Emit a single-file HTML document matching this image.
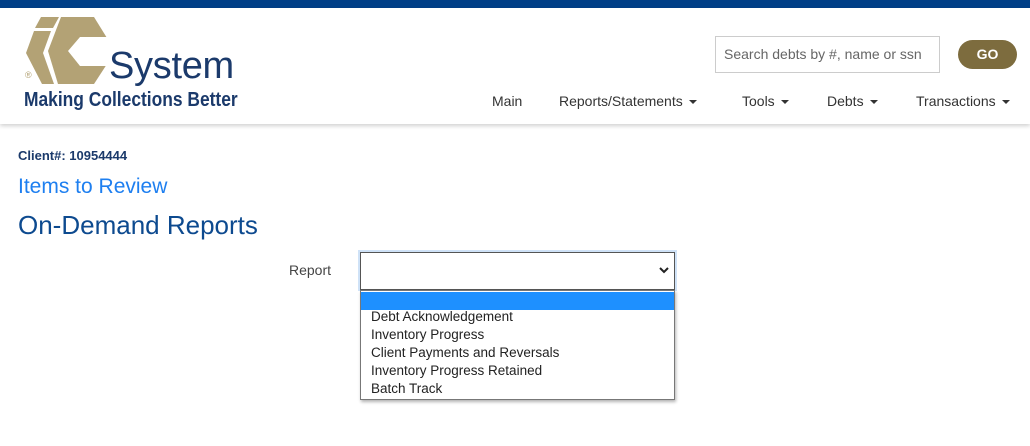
<!DOCTYPE html>
<html><head><style>
body{margin:0;width:1030px;height:446px;background:#fff;font-family:"Liberation Sans",sans-serif;position:relative;overflow:hidden}
.top{position:absolute;left:0;top:0;width:1030px;height:8px;background:#003f87}
.hdr{position:absolute;left:0;top:8px;width:1030px;height:116px;background:#fff;box-shadow:0 2px 4px rgba(0,0,0,.18)}
.a{position:absolute;white-space:nowrap}
.nav{top:93px;font-size:14px;color:#333}
.car{display:inline-block;width:0;height:0;border-left:4px solid transparent;border-right:4px solid transparent;border-top:4px solid #333;vertical-align:middle;margin-left:6px}
.opt{position:absolute;left:10px;font-size:13.5px;color:#222}
</style></head><body>
<div class="top"></div>
<div class="hdr"></div>
<svg class="a" style="left:0;top:0" width="120" height="95" viewBox="0 0 120 95">
<polygon points="61,17 94,17 107,38 107,64 94,84 58,84 48,51" fill="#b3a275"/>
<polygon points="80,37 110,37 110,66 80,66 68,51" fill="#fff"/>
<polygon points="41,17 59,17 53,28 35,28" fill="#b3a275"/>
<polygon points="34,31 51,31 43,53 54,84 42,84 26,53" fill="#b3a275"/>
</svg>
<div class="a" style="left:25px;top:70px;font-size:9px;color:#b3a275">®</div>
<div class="a" style="left:109px;top:45px;font-size:38px;color:#1b3a6b;letter-spacing:-0.3px">System</div>
<div class="a" style="left:24px;top:89px;font-size:20px;font-weight:bold;color:#1b3a6b;transform:scaleX(0.87);transform-origin:left">Making Collections Better</div>
<div class="a" style="left:715px;top:36px;width:225px;height:37px;border:1px solid #ccc;box-sizing:border-box;font-size:14px;color:#666;padding:9px 0 0 8px">Search debts by #, name or ssn</div>
<div class="a" style="left:958px;top:40px;width:59px;height:29px;border-radius:15px;background:#7d6c3e;color:#fff;font-size:14px;font-weight:bold;text-align:center;line-height:29px">GO</div>
<div class="a nav" style="left:492px">Main</div>
<div class="a nav" style="left:559px">Reports/Statements<span class="car"></span></div>
<div class="a nav" style="left:742px">Tools<span class="car"></span></div>
<div class="a nav" style="left:827px">Debts<span class="car"></span></div>
<div class="a nav" style="left:916px">Transactions<span class="car"></span></div>
<div class="a" style="left:18px;top:148px;font-size:13px;font-weight:bold;color:#1b3a6b">Client#: 10954444</div>
<div class="a" style="left:18px;top:175px;font-size:21px;color:#1e7ff0">Items to Review</div>
<div class="a" style="left:18px;top:210px;font-size:26px;color:#0d4a8f">On-Demand Reports</div>
<div class="a" style="left:289px;top:262px;font-size:14px;color:#444">Report</div>
<div class="a" style="left:358px;top:250px;width:319px;height:41px;background:#cfe2f7"></div>
<div class="a" style="left:360px;top:252px;width:315px;height:38px;background:#fff;border:1px solid #555;box-sizing:border-box"></div>
<svg class="a" style="left:659px;top:266px" width="10" height="8"><path d="M1,2 L5,6 L9,2" stroke="#222" stroke-width="2" fill="none"/></svg>
<div class="a" style="left:360px;top:290px;width:315px;height:110px;background:#fff;border:1px solid #777;box-sizing:border-box;box-shadow:1px 2px 3px rgba(0,0,0,.3)">
<div style="position:absolute;left:0;top:1px;width:313px;height:18px;background:#1e90ff"></div>
<div class="opt" style="top:18px">Debt Acknowledgement</div>
<div class="opt" style="top:36px">Inventory Progress</div>
<div class="opt" style="top:54px">Client Payments and Reversals</div>
<div class="opt" style="top:72px">Inventory Progress Retained</div>
<div class="opt" style="top:90px">Batch Track</div>
</div>
</body></html>
